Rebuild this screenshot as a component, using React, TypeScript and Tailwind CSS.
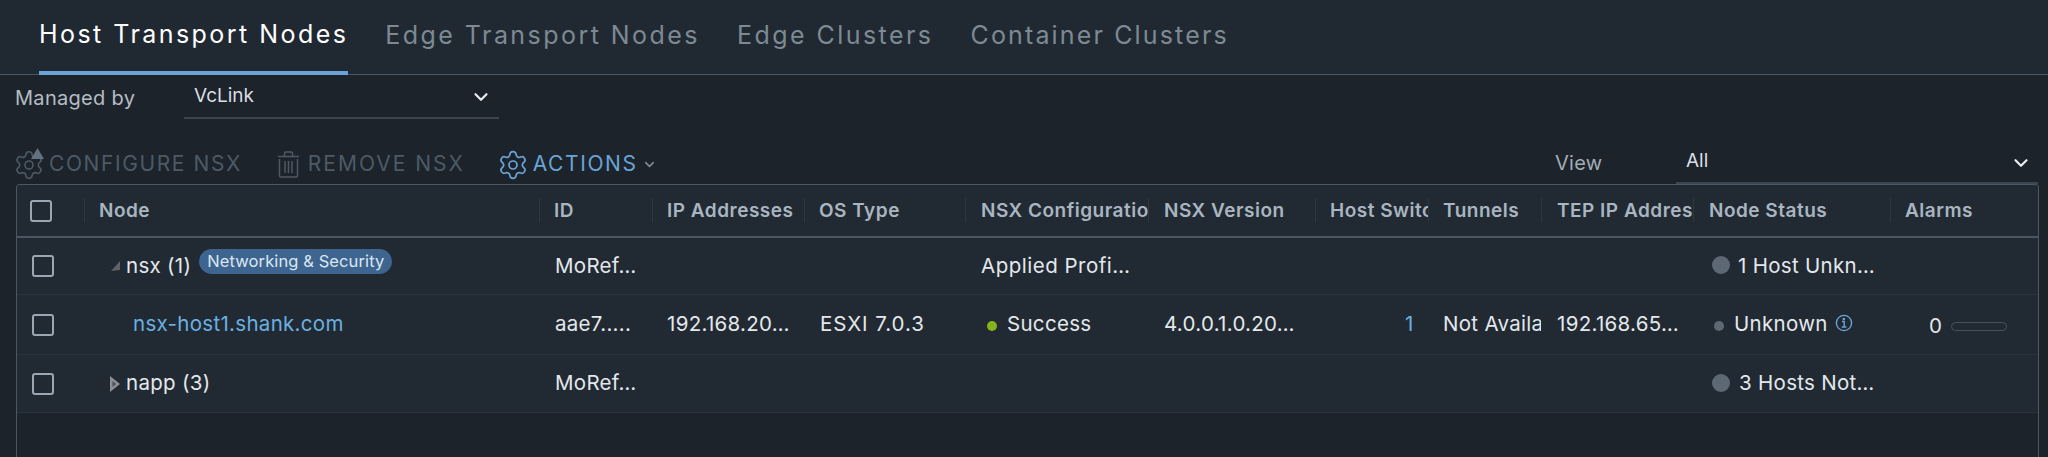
import React from "react";
import { Settings, ChevronDown } from "lucide-react";

const cols = [
  { w: "w-[455px]", pl: "pl-[15px]", name: "Node" },
  { w: "w-[113px]", pl: "pl-[15px]", name: "ID" },
  { w: "w-[152px]", pl: "pl-[15px]", name: "IP Addresses" },
  { w: "w-[161px]", pl: "pl-[15px]", name: "OS Type" },
  { w: "w-[183px]", pl: "pl-[16px]", name: "NSX Configuration" },
  { w: "w-[167px]", pl: "pl-[16px]", name: "NSX Version" },
  { w: "w-[113px]", pl: "pl-[15px]", name: "Host Switches" },
  { w: "w-[113px]", pl: "pl-[15px]", name: "Tunnels" },
  { w: "w-[152px]", pl: "pl-[16px]", name: "TEP IP Addresses" },
  { w: "w-[197px]", pl: "pl-[16px]", name: "Node Status" },
  { w: "w-[147px]", pl: "pl-[15px]", name: "Alarms" },
];

function Checkbox() {
  return <div className="w-[22px] h-[22px] rounded-[3px] border-2 border-[#9aa7b3]" />;
}

function Cell({ w, pl, children, className = "" }: { w: string; pl: string; children?: React.ReactNode; className?: string }) {
  return (
    <div className={`${w} ${pl} shrink-0 flex items-center overflow-hidden whitespace-nowrap h-full ${className}`}>
      {children}
    </div>
  );
}

function Row({ h, cells }: { h: string; cells: React.ReactNode[] }) {
  return (
    <div className={`flex ${h} bg-[#212a33] border-b border-[#29333d] text-[#e3e8ec] text-[20.5px] tracking-[0.3px]`}>
      <div className="w-[67px] shrink-0 flex items-center pl-[15px]">
        <Checkbox />
      </div>
      {cols.map((c, i) => (
        <Cell key={c.name} w={c.w} pl={c.pl} className={i === 1 ? "pl-[16px]" : ""}>
          {cells[i]}
        </Cell>
      ))}
    </div>
  );
}

function ConfigureIcon() {
  return (
    <span className="relative inline-block w-[27px] h-[27px]">
      <Settings size={32} strokeWidth={1.2} color="#4d5a66" className="-ml-[3px] -mt-[2px]" />
      <svg width="13" height="11" viewBox="0 0 13 11" className="absolute right-[-1px] top-[-3px]">
        <path d="M6.5 0 L13 11 H0 Z" fill="#647280" />
      </svg>
    </span>
  );
}

function TrashIcon() {
  return (
    <svg width="23" height="27" viewBox="0 0 23 27" fill="none" stroke="#4d5a66" strokeWidth="1.5">
      <path d="M1 5.5H22M7.5 5V2.2C7.5 1.5 8 1 8.7 1h5.6c.7 0 1.2.5 1.2 1.2V5" />
      <path d="M2.5 8v16.8c0 .7.5 1.2 1.2 1.2h15.6c.7 0 1.2-.5 1.2-1.2V8" />
      <path d="M8 10v12M11.5 10v12M15 10v12" />
    </svg>
  );
}

function Dot({ size }: { size: string }) {
  return <span className={`${size} rounded-full bg-[#5d6875] inline-block shrink-0`} />;
}

export default function App() {
  return (
    <div
      className="w-[2048px] h-[457px] overflow-hidden bg-[#1c232b] flex flex-col text-[20px]"
      style={{ fontFamily: "Inter, 'Liberation Sans', sans-serif" }}
    >
      <div className="h-[75px] shrink-0 bg-[#202932] border-b border-[#4b5662] flex pl-[39px] gap-[37px] text-[25px] tracking-[2.45px]">
        <div className="h-[75px] text-white flex items-center pb-[2px] border-b-[4px] border-[#6ba3d6]">Host Transport Nodes</div>
        <div className="text-[#7d8993] flex items-center pb-[2px]">Edge Transport Nodes</div>
        <div className="text-[#7d8993] flex items-center pb-[2px]">Edge Clusters</div>
        <div className="text-[#7d8993] flex items-center pb-[2px] tracking-[2.15px]">Container Clusters</div>
      </div>

      <div className="h-[44px] shrink-0 flex items-start pl-[15px]">
        <div className="w-[169px] h-[45px] flex items-center text-[20px] tracking-[0.3px] text-[#b5bdc4]">Managed by</div>
        <div className="w-[315px] h-[44px] border-b-2 border-[#3c4650] flex items-center justify-between pl-[10px] pr-[7px] text-[19px] text-[#d9dee2]">
          <span>VcLink</span>
          <ChevronDown size={22} strokeWidth={2.4} color="#e8ecef" className="mt-[2px]" />
        </div>
      </div>

      <div className="h-[65px] shrink-0 flex items-end pl-[16px] pr-[10px]">
        <div className="flex items-center h-[40px] text-[21px] tracking-[1.6px]">
          <ConfigureIcon />
          <span className="ml-[6px] text-[#4d5a66]">CONFIGURE NSX</span>
          <span className="ml-[35px]"><TrashIcon /></span>
          <span className="ml-[8px] text-[#4d5a66] tracking-[2px]">REMOVE NSX</span>
          <span className="ml-[35px] w-[27px] h-[27px]"><Settings size={32} strokeWidth={1.3} color="#6ba3d6" className="-ml-[3px] -mt-[2px]" /></span>
          <span className="ml-[6px] text-[#6ba3d6]">ACTIONS</span>
          <ChevronDown size={15} strokeWidth={2.6} color="#7d8993" className="ml-[4px]" />
        </div>
        <div className="ml-auto flex items-end">
          <div className="w-[121px] h-[38px] flex items-center pb-[5px] text-[20px] tracking-[0.3px] text-[#a3adb5]">View</div>
          <div className="w-[362px] h-[38px] border-b-2 border-[#3c4650] flex items-center justify-between pl-[10px] pr-[6px] text-[19px] text-[#d9dee2]">
            <span className="mb-[5px]">All</span>
            <ChevronDown size={22} strokeWidth={2.4} color="#e8ecef" className="mb-[3px]" />
          </div>
        </div>
      </div>

      <div className="ml-[16px] mr-[9px] flex-1 border-l border-r border-t border-[#4b5662] rounded-t-[4px] overflow-hidden">
        <div className="h-[53px] flex bg-[#212a33] border-b-2 border-[#4b5662] text-[19px] tracking-[0.5px] font-semibold text-[#a9b5c0]">
          <div className="w-[67px] shrink-0 flex items-center pl-[13px] border-r-0">
            <Checkbox />
          </div>
          {cols.map((c) => (
            <div key={c.name} className={`${c.w} ${c.pl} shrink-0 flex items-center overflow-hidden whitespace-nowrap relative`}>
              <span className="absolute left-0 top-[13px] h-[24px] w-px bg-[#2d3741]" />
              <span className="mt-[2px]">{c.name}</span>
            </div>
          ))}
        </div>

        <Row
          h="h-[57px]"
          cells={[
            <span className="flex items-center pl-[10px]">
              <svg width="12" height="12" viewBox="0 0 12 12" className="mr-[5px]">
                <path d="M11 1 L11 10 L2 11 Z" fill="#5f6266" />
              </svg>
              <span>nsx (1)</span>
              <span className="ml-[8px] mb-[9px] h-[25px] px-[8px] rounded-full bg-[#3d6590] text-[#dce6ef] text-[16.5px] tracking-[0.1px] flex items-center">Networking &amp; Security</span>
            </span>,
            "MoRef…",
            "",
            "",
            <span className="tracking-[0.5px]">Applied Profi…</span>,
            "",
            "",
            "",
            "",
            <span className="flex items-center pl-[3px]"><Dot size="w-[18px] h-[18px] mb-[2px]" /><span className="ml-[8px]">1 Host Unkn…</span></span>,
            "",
          ]}
        />
        <Row
          h="h-[60px]"
          cells={[
            <span className="pl-[34px] text-[#6bb0e0]">nsx-host1.shank.com</span>,
            "aae7.....",
            "192.168.20…",
            <span className="pl-[1px] tracking-[0.95px]">ESXI 7.0.3</span>,
            <span className="flex items-center pl-[6px]">
              <span className="w-[10px] h-[10px] mt-[3px] rounded-full bg-[#86b21a] inline-block" />
              <span className="ml-[10px]">Success</span>
            </span>,
            "4.0.0.1.0.20…",
            <span className="pl-[75px] text-[#6bb0e0]">1</span>,
            "Not Available",
            "192.168.65…",
            <span className="flex items-center pl-[5px]">
              <Dot size="w-[10px] h-[10px] mt-[3px]" />
              <span className="ml-[10px]">Unknown</span>
              <svg width="18" height="18" viewBox="0 0 18 18" className="ml-[7px] mb-[4px]" fill="none" stroke="#6ba3d6" strokeWidth="1.4">
                <circle cx="9" cy="9" r="7.6" />
                <path d="M7 7.5h2.2V13M6.8 13h4.6" />
                <circle cx="8.8" cy="5" r="0.6" fill="#6ba3d6" />
              </svg>
            </span>,
            <span className="flex items-center pl-[24px]">
              <span className="mt-[3px]">0</span>
              <span className="ml-[9px] mt-[3px] w-[56px] h-[9px] rounded-full border border-[#46525e]" />
            </span>,
          ]}
        />
        <Row
          h="h-[58px]"
          cells={[
            <span className="flex items-center pl-[10px]">
              <svg width="12" height="18" viewBox="0 0 12 18" className="mr-[5px]">
                <path d="M1 1 L11 9 L1 17 Z" fill="#8b8f93" />
                <path d="M3.5 6 L7 9 L3.5 12 Z" fill="#4a4f55" />
              </svg>
              <span>napp (3)</span>
            </span>,
            "MoRef…",
            "",
            "",
            "",
            "",
            "",
            "",
            "",
            <span className="flex items-center pl-[3px]"><Dot size="w-[18px] h-[18px] mb-[2px]" /><span className="ml-[9px]">3 Hosts Not…</span></span>,
            "",
          ]}
        />
      </div>
    </div>
  );
}
